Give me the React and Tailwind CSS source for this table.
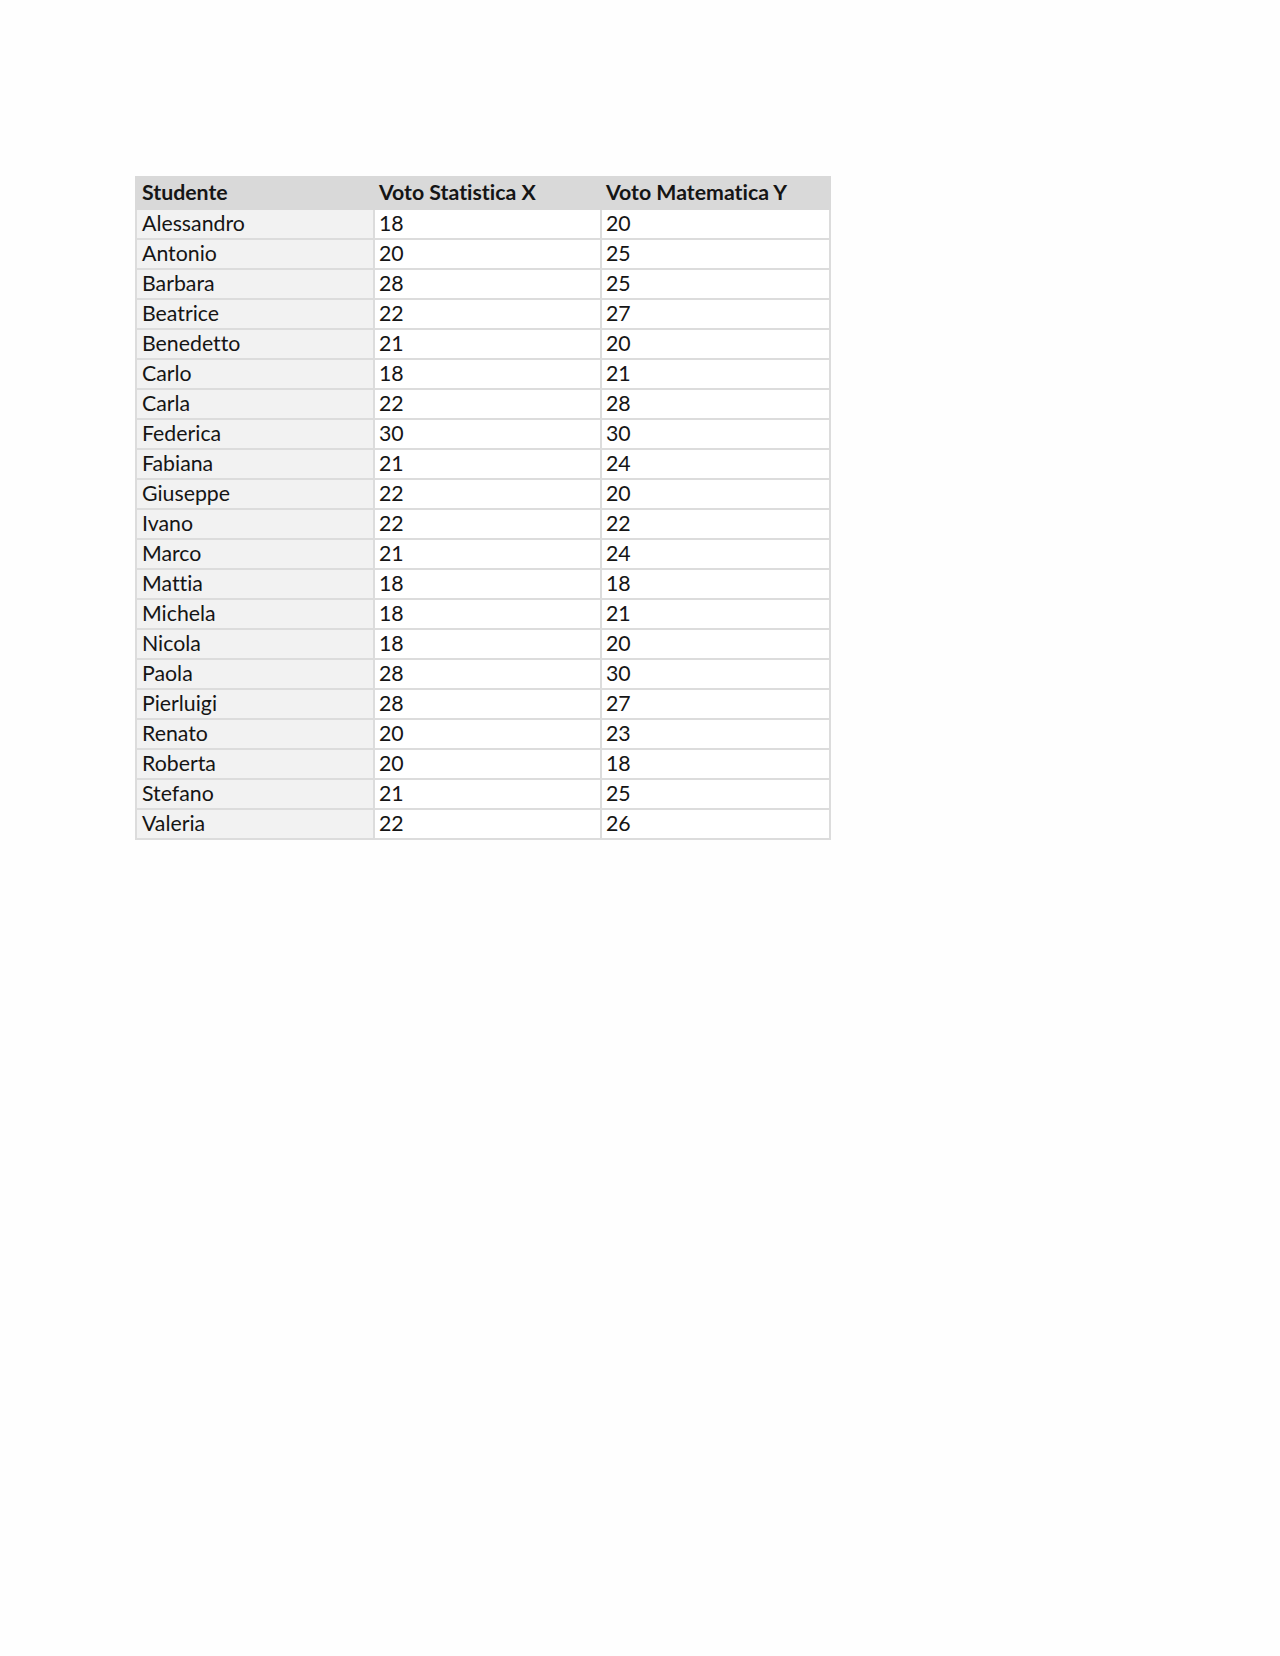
import React from 'react';

const rows = [
  ['Alessandro', 18, 20],
  ['Antonio', 20, 25],
  ['Barbara', 28, 25],
  ['Beatrice', 22, 27],
  ['Benedetto', 21, 20],
  ['Carlo', 18, 21],
  ['Carla', 22, 28],
  ['Federica', 30, 30],
  ['Fabiana', 21, 24],
  ['Giuseppe', 22, 20],
  ['Ivano', 22, 22],
  ['Marco', 21, 24],
  ['Mattia', 18, 18],
  ['Michela', 18, 21],
  ['Nicola', 18, 20],
  ['Paola', 28, 30],
  ['Pierluigi', 28, 27],
  ['Renato', 20, 23],
  ['Roberta', 20, 18],
  ['Stefano', 21, 25],
  ['Valeria', 22, 26],
];

export default function App() {
  return (
    <div className="min-h-[1656px] w-[1280px] bg-[#fefefe] pt-[176px] pl-[135px] font-['Lato',sans-serif] text-[#151515] [font-variant-ligatures:none]">
      <table className="border-collapse text-[21.3px] leading-none">
        <thead>
          <tr className="h-[32px] bg-[#d9d9d9] font-bold">
            <th className="w-[238px] border-2 border-[#d9d9d9] pl-[5px] pb-[1px] text-left">Studente</th>
            <th className="w-[227px] border-2 border-[#d9d9d9] pl-[4px] pb-[1px] text-left">Voto Statistica X</th>
            <th className="w-[229px] border-2 border-[#d9d9d9] pl-[4px] pb-[1px] text-left">Voto Matematica Y</th>
          </tr>
        </thead>
        <tbody>
          {rows.map(([name, x, y]) => (
            <tr key={name} className="h-[30px]">
              <td className="border-2 border-[#dcdcdc] bg-[#f2f2f2] pl-[5px] pb-[1px]">{name}</td>
              <td className="border-2 border-[#dcdcdc] bg-white pl-[4px] pb-[1px]">{x}</td>
              <td className="border-2 border-[#dcdcdc] bg-white pl-[4px] pb-[1px]">{y}</td>
            </tr>
          ))}
        </tbody>
      </table>
    </div>
  );
}
